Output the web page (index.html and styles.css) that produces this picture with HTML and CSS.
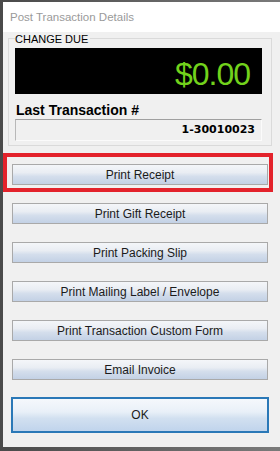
FILE: index.html
```html
<!DOCTYPE html>
<html>
<head>
<meta charset="utf-8">
<link rel="stylesheet" href="styles.css">
</head>
<body>
<div class="screen">
  <div class="window">
    <div class="titlebar">Post Transaction Details</div>
    <div class="content">
      <div class="group">
        <div class="group-label">CHANGE DUE</div>
        <div class="display">$0.00</div>
        <div class="last-label">Last Transaction #</div>
        <div class="textbox">1-30010023</div>
      </div>
      <div class="actions">
        <div class="highlight"><button class="btn">Print Receipt</button></div>
        <button class="btn">Print Gift Receipt</button>
        <button class="btn">Print Packing Slip</button>
        <button class="btn">Print Mailing Label / Envelope</button>
        <button class="btn">Print Transaction Custom Form</button>
        <button class="btn">Email Invoice</button>
      </div>
      <button class="ok">OK</button>
    </div>
  </div>
</div>
</body>
</html>
```
FILE: styles.css
```css
html, body {
  margin: 0;
  padding: 0;
}
body {
  background: #5e5e5e;
  font-family: "Liberation Sans", Arial, sans-serif;
}
.screen {
  width: 280px;
  height: 451px;
  box-sizing: border-box;
  padding: 2px 0 0 3px;
  background: linear-gradient(to right, #4a4a4a, #7a7a7a);
  overflow: hidden;
}
.window {
  height: 445px;
  background: #f0f0f0;
  display: flex;
  flex-direction: column;
}
.titlebar {
  height: 30px;
  flex: none;
  background: #ffffff;
  color: #9a9a9a;
  font-size: 11.5px;
  line-height: 30px;
  padding-left: 7px;
}
.content {
  display: flex;
  flex-direction: column;
}
.group {
  margin: 6px 8px 0 5px;
  height: 108px;
  box-sizing: border-box;
  border: 1px solid #dadada;
  padding: 0 9px 0 6px;
}
.group-label {
  width: fit-content;
  margin-top: -6px;
  padding-right: 2px;
  background: #f0f0f0;
  color: #000;
  font-size: 11px;
  line-height: 13px;
}
.display {
  margin-top: 2px;
  height: 46px;
  overflow: hidden;
  background: #000;
  color: #72d21c;
  font-size: 32px;
  letter-spacing: -1px;
  line-height: 53px;
  text-align: right;
  padding-right: 12px;
}
.last-label {
  margin-top: 8px;
  margin-left: 1px;
  font-weight: bold;
  font-size: 14px;
  line-height: 16px;
  color: #000;
}
.textbox {
  margin-top: 1px;
  height: 22px;
  box-sizing: border-box;
  border: 1px solid;
  border-color: #a0a0a0 #fbfbfb #fbfbfb #b8b8b8;
  background: #f0f0f0;
  font-family: "DejaVu Sans", Verdana, sans-serif;
  font-weight: bold;
  font-size: 11px;
  line-height: 20px;
  text-align: right;
  padding-right: 6px;
  color: #000;
}
.actions {
  margin: 7px 12px 0 9px;
  display: flex;
  flex-direction: column;
  gap: 18px;
}
.highlight {
  margin: 0 -5px -7px -9px;
  border: 4px solid #e3222b;
  padding: 7px 1px 3px 5px;
}
.btn {
  display: block;
  width: 100%;
  height: 21px;
  box-sizing: border-box;
  margin: 0;
  padding: 0;
  border: 1px solid #a9a9a9;
  border-radius: 0;
  background: linear-gradient(to bottom, #f4f6f9 0%, #e9edf3 40%, #d4deec 60%, #c3d1e5 100%);
  font-family: "Liberation Sans", Arial, sans-serif;
  font-size: 12px;
  color: #1b1b1b;
}
.ok {
  margin: 17px 0 0 8px;
  width: 258px;
  height: 36px;
  box-sizing: border-box;
  padding: 0;
  border: 2px solid #2a78b7;
  border-radius: 0;
  background: linear-gradient(to bottom, #f5f8fc 0%, #e9f0f8 40%, #d2e0f0 60%, #c0d4ec 100%);
  font-family: "Liberation Sans", Arial, sans-serif;
  font-size: 12px;
  color: #1b1b1b;
}
```
